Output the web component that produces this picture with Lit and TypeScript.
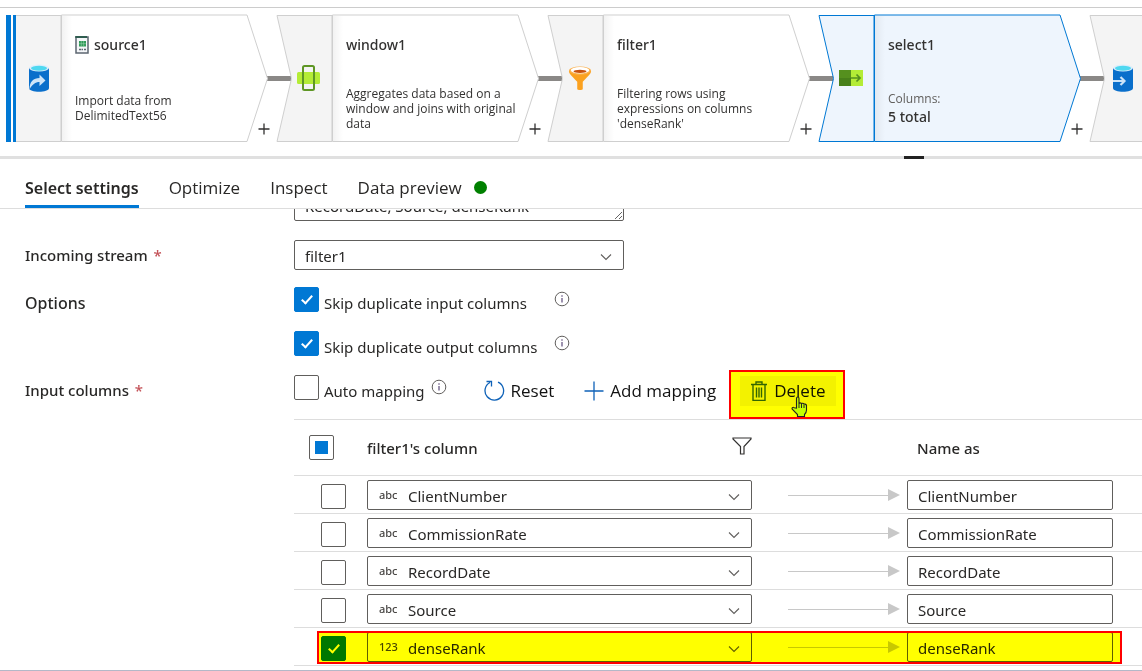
import { LitElement, html, svg, css, nothing } from "lit";
import { customElement, property, state } from "lit/decorators.js";
import { classMap } from "lit/directives/class-map.js";

const sourceIcon = svg`
  <svg width="22" height="28" viewBox="0 0 22 28" aria-hidden="true">
    <path d="M1 4v20c0 5 20 5 20 0V4z" fill="#0a6fcb"/>
    <ellipse cx="11" cy="4" rx="10" ry="3.5" fill="#dfeefb"/>
    <ellipse cx="11" cy="4.2" rx="8" ry="2.5" fill="#4fd8f0"/>
    <path d="M1.500 25.500c0-8 4-11.500 10-11.500V10.500l6 6-6 5.500v-4c-4 0-7.500 2.500-10 7.500z" fill="#cde4f8"/>
  </svg>`;
const windowIcon = svg`
  <svg width="24" height="28" viewBox="0 0 24 28" aria-hidden="true">
    <rect x="0" y="8" width="23" height="12" rx="1.5" fill="#b4ec36"/>
    <rect x="6" y="2" width="11" height="24" rx="1.5" fill="none" stroke="#5e9624" stroke-width="2"/>
    <rect x="7" y="8" width="9" height="12" fill="#b4ec36"/>
  </svg>`;
const filterIcon = svg`
  <svg width="24" height="28" viewBox="0 0 26 28" aria-hidden="true">
    <path d="M1 6.5C1 9 3 11 10 18v8c0 1.500 6 1.500 6 0v-8c7-7 9-9 9-11.500z" fill="#fba11f"/>
    <ellipse cx="13" cy="6" rx="12" ry="4.500" fill="#fbb04a"/>
    <ellipse cx="13" cy="5.600" rx="10" ry="3.400" fill="#fff"/>
    <ellipse cx="13" cy="6.800" rx="7" ry="1.800" fill="#c8510c"/>
  </svg>`;
const selectIcon = svg`
  <svg width="24" height="28" viewBox="0 0 24 28" aria-hidden="true">
    <rect x="0" y="6" width="12" height="16" fill="#55901e"/>
    <rect x="0" y="14" width="12" height="8" fill="#48801a"/>
    <rect x="12" y="6" width="12" height="16" fill="#b4ec36"/>
    <path d="M12 14h9M17.500 10.500L21 14l-3.500 3.500" fill="none" stroke="#55901e" stroke-width="1.700"/>
  </svg>`;
const sinkIcon = svg`
  <svg width="22" height="28" viewBox="0 0 22 28" aria-hidden="true">
    <path d="M1 4v20c0 5 20 5 20 0V4z" fill="#0a6fcb"/>
    <ellipse cx="11" cy="4" rx="10" ry="3.500" fill="#dfeefb"/>
    <ellipse cx="11" cy="4.200" rx="8" ry="2.500" fill="#4fd8f0"/>
    <path d="M1 17h11M8.500 13l4 4-4 4" fill="none" stroke="#cde4f8" stroke-width="2.200"/>
  </svg>`;
const csvIcon = svg`
  <svg width="14" height="18" viewBox="0 0 14 18" aria-hidden="true">
    <path d="M1 1h12v16H1z" fill="#f4f6f8" stroke="#5c6670" stroke-width="1.500"/>
    <path d="M.3 1h11.700" stroke="#2f5d50" stroke-width="2"/>
    <path d="M4 5h7v5.500H4z" fill="#2e9a57"/>
    <path d="M4 7.700h7M6.300 5v5.500M8.600 5v5.500" stroke="#a7d8ba" stroke-width=".5"/>
    <path d="M4 13.500h2M6.500 13.500h1.500M9 13.500h2" stroke="#5c6670" stroke-width="1.500"/>
  </svg>`;
const chevron = svg`
  <svg class="chevron" width="12" height="8" viewBox="0 0 12 8" aria-hidden="true">
    <path d="M1 1.500l5 5 5-5" fill="none" stroke="#605e5c" stroke-width="1.100"/>
  </svg>`;
const infoIcon = svg`
  <svg class="info" width="16" height="16" viewBox="0 0 16 16" role="img" aria-label="More information">
    <circle cx="8" cy="8" r="6.800" fill="none" stroke="#605e5c"/>
    <path d="M8 7v4.500" stroke="#5c4a7a" stroke-width="1.200"/>
    <circle cx="8" cy="5" r=".8" fill="#5c4a7a"/>
  </svg>`;

interface FlowStep {
  name: string;
  text?: string;
  icon: unknown;
  badge?: unknown;
  first?: boolean;
  selected?: boolean;
  total?: string;
}

const STEPS: FlowStep[] = [
  { name: "source1", text: "Import data from DelimitedText56", icon: sourceIcon, badge: csvIcon, first: true },
  { name: "window1", text: "Aggregates data based on a window and joins with original data", icon: windowIcon },
  { name: "filter1", text: "Filtering rows using expressions on columns 'denseRank'", icon: filterIcon },
  { name: "select1", total: "5 total", icon: selectIcon, selected: true },
  { name: "", icon: sinkIcon },
];

@customElement("flow-step")
class FlowStepElement extends LitElement {
  @property({ attribute: false }) step!: FlowStep;

  static styles = css`
    :host {
      display: grid;
      grid-template-columns: 56px 206px 9px;
      flex: none;
      height: 134px;
      color: #323130;
    }
    .shape {
      grid-area: 1 / 1 / 2 / 4;
      overflow: visible;
      width: 271px;
      height: 134px;
    }
    .panel { fill: #f4f4f4; stroke: #cfcfcf; }
    .body { fill: #fff; stroke: #cfcfcf; }
    .selected .panel, .selected .body { fill: #eef5fd; stroke: #0078d4; }
    .wrap { display: contents; }
    .icon {
      grid-area: 1 / 1;
      display: flex;
      align-items: center;
      justify-content: flex-end;
      padding-right: 11px;
    }
    .text {
      grid-area: 1 / 2;
      display: flex;
      flex-direction: column;
      padding: 24px 18px 0 14px;
      z-index: 1;
    }
    .title {
      display: flex;
      align-items: center;
      gap: 5px;
      margin: 0;
      font-family: "Noto Sans", sans-serif;
      font-size: 14px;
      line-height: 20px;
      font-weight: 500;
    }
    .desc {
      display: flex;
      flex-direction: column;
      justify-content: center;
      height: 46px;
      margin: 30px 0 0;
      font-size: 12px;
      line-height: 15px;
    }
    .muted { color: #605e5c; line-height: 18px; }
    .total { font-family: "Noto Sans", sans-serif; font-size: 14px; line-height: 18px; font-weight: 500; }
    .add {
      grid-area: 1 / 2 / 2 / 4;
      align-self: end;
      justify-self: end;
      display: flex;
      z-index: 1;
      margin: 0 6px 10px 0;
      padding: 0;
      border: 0;
      background: none;
    }
  `;

  render() {
    const s = this.step;
    return html`
      <div class=${classMap({ wrap: true, selected: !!s.selected })}>
        <svg class="shape" viewBox="0 0 271 134" aria-hidden="true">
          <defs>
            <linearGradient id="edge"><stop offset="0" stop-color="#000" stop-opacity=".05"/><stop offset="1" stop-color="#000" stop-opacity="0"/></linearGradient>
          </defs>
          ${s.first
            ? svg`<path class="panel" d="M10.500 4.500H56V130.500H10.500z"/>
                <path d="M1 4h5v127H1zM8 4h3v127H8z" fill="#0078d4"/>`
            : svg`<path class="panel" d="M1 4.500H56V130.500H1L15.500 67.500z"/>`}
          ${s.name
            ? svg`<path d="M262 67.500h24" stroke="#8a8886" stroke-width="5"/>
                <path class="body" d="M56.500 4H242L262.500 67.500L242 130.500H56.500z"/>
                <path d="M57 5h10v125H57z" fill="url(#edge)"/>`
            : nothing}
        </svg>
        <div class="icon">${s.icon}</div>
        ${s.name
          ? html`<div class="text">
                <h2 class="title">${s.badge ?? nothing}<span>${s.name}</span></h2>
                <div class="desc">
                  ${s.total
                    ? html`<span class="muted">Columns:</span><span class="total">${s.total}</span>`
                    : html`<span>${s.text}</span>`}
                </div>
              </div>
              <button class="add" aria-label="Add step">
                <svg width="12" height="12" viewBox="0 0 12 12"><path d="M6 0.500v11M.5 6h11" stroke="#323130" stroke-width="1.300"/></svg>
              </button>`
          : nothing}
      </div>
    `;
  }
}

interface Mapping { type: string; name: string; checked: boolean; }

@customElement("app-root")
class AppRoot extends LitElement {
  @state() private rows: Mapping[] = [
    { type: "abc", name: "ClientNumber", checked: false },
    { type: "abc", name: "CommissionRate", checked: false },
    { type: "abc", name: "RecordDate", checked: false },
    { type: "abc", name: "Source", checked: false },
    { type: "123", name: "denseRank", checked: true },
  ];

  static styles = css`
    :host {
      display: flex;
      flex-direction: column;
      height: 100vh;
      overflow: hidden;
      box-sizing: border-box;
      padding-top: 7px;
      border-bottom: 1px solid #b4b8c8;
      background: #fff;
      color: #292827;
      font-family: "Noto Sans", "Open Sans", sans-serif;
      font-size: 15px;
      line-height: 20px;
    }
    *, *::before, *::after { box-sizing: border-box; }
    button, input, select, textarea { font: inherit; color: inherit; margin: 0; }
    .flow {
      display: flex;
      flex: none;
      overflow: hidden;
      padding: 3px 0 11px 5px;
      border-top: 1px solid #ccc;
      font-family: "Open Sans", "Noto Sans", sans-serif;
    }
    .splitter { flex: none; height: 3px; background: #e0e0e0; }
    .grip { width: 20px; height: 3px; margin-left: auto; margin-right: 218px; background: #222; }
    .tabs {
      display: flex;
      flex: none;
      gap: 30px;
      height: 50px;
      padding: 0 25px;
      border-bottom: 1px solid #ddd;
      font-family: "Open Sans", "Noto Sans", sans-serif;
    }
    .tab {
      display: flex;
      align-items: center;
      gap: 12px;
      padding: 11px 0 0;
      border: 0;
      border-bottom: 3px solid transparent;
      background: none;
      font-size: 17px;
      line-height: 24px;
    }
    .tab.active { font-family: "Noto Sans", sans-serif; font-size: 16px; font-weight: 600; border-bottom-color: #0078d4; }
    .dot { width: 13px; height: 13px; border-radius: 50%; background: #008000; }
    .settings { flex: 1; min-height: 0; overflow: hidden; }
    .form {
      display: grid;
      grid-template-columns: 269px 1fr;
      margin-top: -18px;
      padding-left: 25px;
    }
    .name { font-weight: 500; line-height: 25px; padding-top: 3px; }
    .heading { font-size: 16px; padding-top: 4px; }
    .req { color: #c4545a; margin-left: 2px; }
    .field {
      width: 100%;
      height: 30px;
      padding: 2px 10px 0;
      border: 1px solid #605e5c;
      border-radius: 2px;
      background: transparent;
      appearance: none;
      display: block;
      outline: 0;
    }
    .narrow { max-width: 330px; }
    .description { grid-column: 2; margin-bottom: 19px; padding: 4px 10px 2px; overflow: hidden; resize: both; }
    .combo { display: grid; align-items: center; margin-bottom: 17px; }
    .combo > * { grid-area: 1 / 1; }
    .chevron { justify-self: end; margin: 3px 12px 0 0; pointer-events: none; }
    .checks { display: flex; flex-direction: column; gap: 19px; margin-bottom: 19px; }
    .line { display: flex; align-items: center; gap: 6px; height: 25px; }
    .check-label { display: flex; gap: 5px; }
    .checks .check-label { min-width: 254px; }
    .caption { line-height: 25px; padding-top: 4px; height: 25px; }
    .box {
      appearance: none;
      display: block;
      flex: none;
      width: 25px;
      height: 25px;
      border: 1px solid #605e5c;
      border-radius: 2px;
      background: #fff;
    }
    .box:checked { background: #0078d4; border-color: #0078d4; }
    .box:checked::after {
      content: "";
      display: block;
      width: 6px;
      height: 11px;
      margin: 5px 0 0 9px;
      border: solid #fff;
      border-width: 0 2px 2px 0;
      transform: rotate(42deg);
    }
    .box:indeterminate::after {
      content: "";
      display: block;
      width: 13px;
      height: 13px;
      margin: 5px;
      background: #0078d4;
    }
    .info { flex: none; margin-bottom: 2px; }
    .commands {
      display: flex;
      align-items: center;
      gap: 10px;
      margin-left: 21px;
      padding-top: 6px;
      font-family: "Open Sans", "Noto Sans", sans-serif;
    }
    .command {
      position: relative;
      display: flex;
      align-items: center;
      gap: 6px;
      height: 30px;
      padding: 0 10px;
      border: 0;
      background: none;
      font-size: 17px;
      white-space: nowrap;
      color: #111;
    }
    .command.hover { background: #f3f2f1; margin-left: 4px; }
    .mark { pointer-events: none; position: absolute; inset: -6px -9px -13px -11px; z-index: 2; border: 2px solid #f00; }
    .glow { pointer-events: none; position: absolute; inset: -6px -9px -13px -11px; z-index: 1; background: #ff0; mix-blend-mode: multiply; }
    .pointer { pointer-events: none; position: absolute; left: 51px; top: 20px; z-index: 3; }
    .grid {
      width: 100%;
      margin-top: 19px;
      border-collapse: separate;
      border-spacing: 0;
      table-layout: fixed;
      border-top: 1px solid #ddd;
    }
    .col-check { width: 73px; }
    .col-arrow { width: 155px; }
    .col-name { width: 235px; }
    .grid th { height: 56px; padding: 0; text-align: left; font-weight: 500; border-bottom: 1px solid #ddd; }
    .grid td { height: 38px; padding: 4px 0 3px; border-bottom: 1px solid #ddd; }
    .grid td:first-child { padding-left: 27px; padding-top: 6px; }
    .grid th:first-child { padding-left: 15px; }
    .grid th:last-child { padding-left: 10px; }
    .grid td:last-child { padding-right: 29px; }
    .head { display: flex; align-items: center; justify-content: space-between; }
    .funnel { margin-bottom: 4px; }
    .grid .combo { margin: 0; }
    .grid tr { position: relative; }
    .source { padding-left: 40px; }
    .type { font-size: 11px; line-height: 16px; margin-left: 12px; font-weight: 500; color: #484644; pointer-events: none; }
    .arrow { display: flex; align-items: center; padding: 0 7px 0 36px; }
    .shaft { flex: 1; height: 1px; background: #c8c8c8; }
    .row-mark { pointer-events: none; position: absolute; inset: 3px 20px 2px 23px; z-index: 2; border: 2px solid #f00; }
    .row-glow { pointer-events: none; position: absolute; inset: 3px 20px 2px 23px; z-index: 1; background: #ff0; mix-blend-mode: multiply; }
  `;

  private toggle(index: number) {
    this.rows = this.rows.map((r, i) => (i === index ? { ...r, checked: !r.checked } : r));
  }

  private renderRow(row: Mapping, index: number) {
    return html`
      <tr>
        <td>
          <input class="box" type="checkbox" aria-label="Choose ${row.name}" .checked=${row.checked} @change=${() => this.toggle(index)} />
          ${row.checked ? html`<span class="row-glow"></span><span class="row-mark"></span>` : nothing}
        </td>
        <td>
          <div class="combo">
            <select class="field source" aria-label="Input column"><option>${row.name}</option></select>
            <span class="type">${row.type}</span>
            ${chevron}
          </div>
        </td>
        <td>
          <div class="arrow">
            <span class="shaft"></span>
            <svg width="12" height="12" viewBox="0 0 12 12" aria-hidden="true"><path d="M0 0l12 6-12 6z" fill="#c8c8c8"/></svg>
          </div>
        </td>
        <td><input class="field" type="text" aria-label="Name as" .value=${row.name} /></td>
      </tr>
    `;
  }

  render() {
    const some = this.rows.some((r) => r.checked);
    return html`
      <section class="flow" aria-label="Data flow">
        ${STEPS.map((step) => html`<flow-step .step=${step}></flow-step>`)}
      </section>
      <div class="splitter"><div class="grip"></div></div>
      <nav class="tabs">
        <button class="tab active">Select settings</button>
        <button class="tab">Optimize</button>
        <button class="tab">Inspect</button>
        <button class="tab">Data preview<span class="dot"></span></button>
      </nav>
      <main class="settings">
        <div class="form">
          <textarea class="field narrow description" rows="1" aria-label="Description" .value=${"RecordDate, Source, denseRank"}></textarea>

          <label class="name" for="stream">Incoming stream <span class="req">*</span></label>
          <div class="combo narrow">
            <select class="field" id="stream"><option>filter1</option></select>
            ${chevron}
          </div>

          <span class="name heading">Options</span>
          <div class="checks">
            <div class="line">
              <label class="check-label"><input class="box" type="checkbox" checked /><span class="caption">Skip duplicate input columns</span></label>
              ${infoIcon}
            </div>
            <div class="line">
              <label class="check-label"><input class="box" type="checkbox" checked /><span class="caption">Skip duplicate output columns</span></label>
              ${infoIcon}
            </div>
          </div>

          <span class="name">Input columns <span class="req">*</span></span>
          <div>
            <div class="line">
              <label class="check-label"><input class="box" type="checkbox" /><span class="caption">Auto mapping</span></label>
              ${infoIcon}
              <div class="commands">
                <button class="command">
                  <svg width="21" height="22" viewBox="0 0 21 22" aria-hidden="true">
                    <path d="M14 2.200A9.300 9.300 0 1 1 6 2.500M2.500 1.500h5v5" fill="none" stroke="#0f62b8" stroke-width="1.300"/>
                  </svg>
                  Reset
                </button>
                <button class="command">
                  <svg width="20" height="20" viewBox="0 0 20 20" aria-hidden="true">
                    <path d="M10 .5v19M.5 10h19" stroke="#0f62b8" stroke-width="1.300"/>
                  </svg>
                  Add mapping
                </button>
                <button class="command hover">
                  <svg width="18" height="20" viewBox="0 0 18 20" aria-hidden="true">
                    <path d="M1 3.500h16M6 3.500V1h6v2.500M3 3.500v16h12v-16M6.500 6.500v10M9 6.500v10M11.500 6.500v10" fill="none" stroke="#33669c" stroke-width="1.400"/>
                  </svg>
                  Delete
                  <span class="glow"></span>
                  <span class="mark"></span>
                  <svg class="pointer" width="18" height="22" viewBox="0 0 18 22" aria-hidden="true">
                    <path d="M5.500 12V2.500c0-2 2.500-2 2.500 0V8c0-1.500 2.500-1.500 2.500 0 0-1 2.500-1 2.500.5 0-.8 2.500-.6 2.500 1V14c0 2-1 3.500-2 4.500v2H6.500v-2L1.500 13.500c-1.200-1.500.5-2.800 1.700-1.800z" fill="#c4ff00" stroke="#222" stroke-width="1.100"/>
                    <path d="M8 8v4M10.500 8v4M13 8.500V12" stroke="#222"/>
                  </svg>
                </button>
              </div>
            </div>
            <table class="grid">
              <colgroup><col class="col-check" /><col /><col class="col-arrow" /><col class="col-name" /></colgroup>
              <thead>
                <tr>
                  <th><input class="box" type="checkbox" aria-label="Choose all" .indeterminate=${some} /></th>
                  <th>
                    <div class="head">
                      filter1's column
                      <svg class="funnel" width="20" height="20" viewBox="0 0 20 20" aria-label="Filter" role="img">
                        <path d="M1 2h18v1l-7 7.500V18H8.500v-7.500L1 3z" fill="none" stroke="#323130" stroke-width="1.200"/>
                      </svg>
                    </div>
                  </th>
                  <th></th>
                  <th>Name as</th>
                </tr>
              </thead>
              <tbody>${this.rows.map((row, i) => this.renderRow(row, i))}</tbody>
            </table>
          </div>
        </div>
      </main>
    `;
  }
}
